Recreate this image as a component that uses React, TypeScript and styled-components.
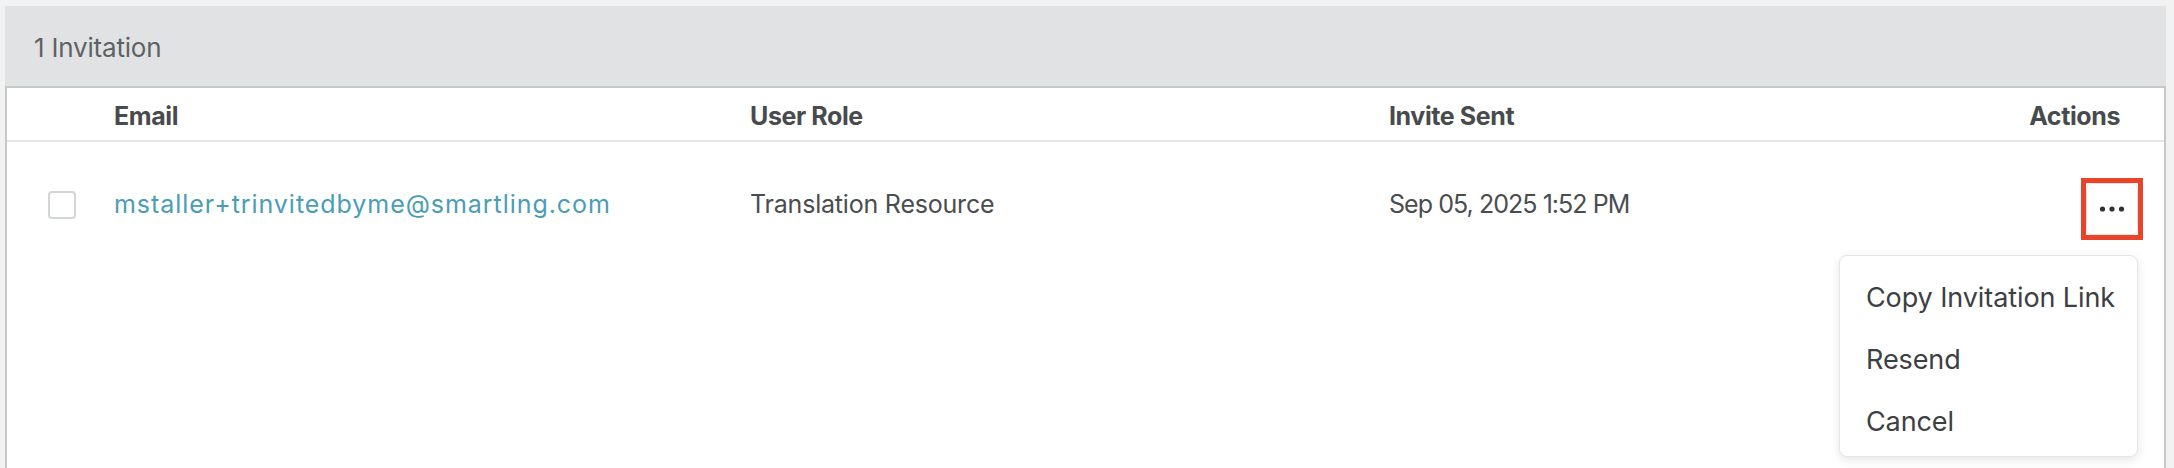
import React from 'react';
import styled, { createGlobalStyle } from 'styled-components';

const GlobalStyle = createGlobalStyle`
  html, body {
    margin: 0;
    padding: 0;
    background: #f2f2f2;
    font-family: Inter, "Noto Sans", sans-serif;
  }
`;

const Page = styled.div`
  height: 468px;
  padding: 6px 8px 0 5px;
  box-sizing: border-box;
  overflow: hidden;
  display: flex;
  flex-direction: column;
`;

const CountBar = styled.div`
  height: 80px;
  flex: none;
  display: flex;
  align-items: center;
  padding: 2px 0 0 29px;
  box-sizing: border-box;
  background: #e1e2e4;
  color: #5e6265;
  font-size: 26px;
  letter-spacing: -0.2px;
`;

const Table = styled.div`
  flex: 1;
  background: #fff;
  border: 2px solid #c4c8c7;
  border-bottom: none;
`;

const columns = '107px 636px 639px 1fr auto';

const HeadRow = styled.div`
  display: grid;
  grid-template-columns: ${columns};
  align-items: center;
  height: 54px;
  padding-top: 4px;
  box-sizing: border-box;
  border-bottom: 2px solid #e4e6e6;
`;

const HeadCell = styled.div<{ $right?: boolean }>`
  font-size: 25px;
  font-weight: 700;
  color: #474b4d;
  letter-spacing: -0.4px;
  text-align: ${(p) => (p.$right ? 'right' : 'left')};
  padding-right: ${(p) => (p.$right ? '44px' : '0')};
`;

const BodyRow = styled.div`
  display: grid;
  grid-template-columns: ${columns};
  align-items: start;
  padding-top: 44px;
`;

const Cell = styled.div<{ $tight?: boolean }>`
  font-size: 25px;
  line-height: 36px;
  color: #4a4d50;
  letter-spacing: ${(p) => (p.$tight ? '-0.95px' : '-0.2px')};
`;

const EmailLink = styled.a`
  font-size: 25px;
  line-height: 36px;
  color: #4a9db6;
  text-decoration: none;
  letter-spacing: 0.95px;
`;

const CheckCell = styled.div`
  padding-left: 41px;
  padding-top: 5px;
`;

const Checkbox = styled.span`
  display: block;
  width: 24px;
  height: 24px;
  border: 2px solid #d2d6d5;
  border-radius: 4px;
  background: #fff;
`;

const ActionsCell = styled.div`
  position: relative;
  padding-right: 21px;
`;

const Highlight = styled.div`
  margin-top: -8px;
  border: 5px solid #e8432b;
`;

const MoreButton = styled.button`
  width: 52px;
  height: 52px;
  display: flex;
  align-items: center;
  justify-content: center;
  background: #fff;
  border: 1px solid #e2e3e3;
  border-radius: 6px;
  padding: 0;
`;

const Menu = styled.div`
  position: absolute;
  top: 69px;
  right: 26px;
  width: 299px;
  box-sizing: border-box;
  padding: 10px 0 4px;
  background: #fff;
  border: 1px solid #e6e6e6;
  border-radius: 8px;
  box-shadow: 0 3px 10px rgba(0, 0, 0, 0.1);
`;

const MenuItem = styled.div`
  height: 62px;
  display: flex;
  align-items: center;
  padding-left: 26px;
  font-size: 27px;
  color: #3d4043;
  letter-spacing: -0.1px;
  white-space: nowrap;
`;

const Dots = () => (
  <svg width="30" height="8" viewBox="0 0 30 8">
    <circle cx="5.5" cy="4" r="2.6" fill="#2f3133" />
    <circle cx="15" cy="4" r="2.6" fill="#2f3133" />
    <circle cx="24.5" cy="4" r="2.6" fill="#2f3133" />
  </svg>
);

export default function App() {
  return (
    <>
      <GlobalStyle />
      <Page>
        <CountBar>1 Invitation</CountBar>
        <Table>
          <HeadRow>
            <div />
            <HeadCell>Email</HeadCell>
            <HeadCell>User Role</HeadCell>
            <HeadCell>Invite Sent</HeadCell>
            <HeadCell $right>Actions</HeadCell>
          </HeadRow>
          <BodyRow>
            <CheckCell>
              <Checkbox />
            </CheckCell>
            <Cell>
              <EmailLink href="#">mstaller+trinvitedbyme@smartling.com</EmailLink>
            </Cell>
            <Cell>Translation Resource</Cell>
            <Cell $tight>Sep 05, 2025 1:52 PM</Cell>
            <ActionsCell>
              <Highlight>
                <MoreButton aria-label="Actions">
                  <Dots />
                </MoreButton>
              </Highlight>
              <Menu>
                <MenuItem>Copy Invitation Link</MenuItem>
                <MenuItem>Resend</MenuItem>
                <MenuItem>Cancel</MenuItem>
              </Menu>
            </ActionsCell>
          </BodyRow>
        </Table>
      </Page>
    </>
  );
}
